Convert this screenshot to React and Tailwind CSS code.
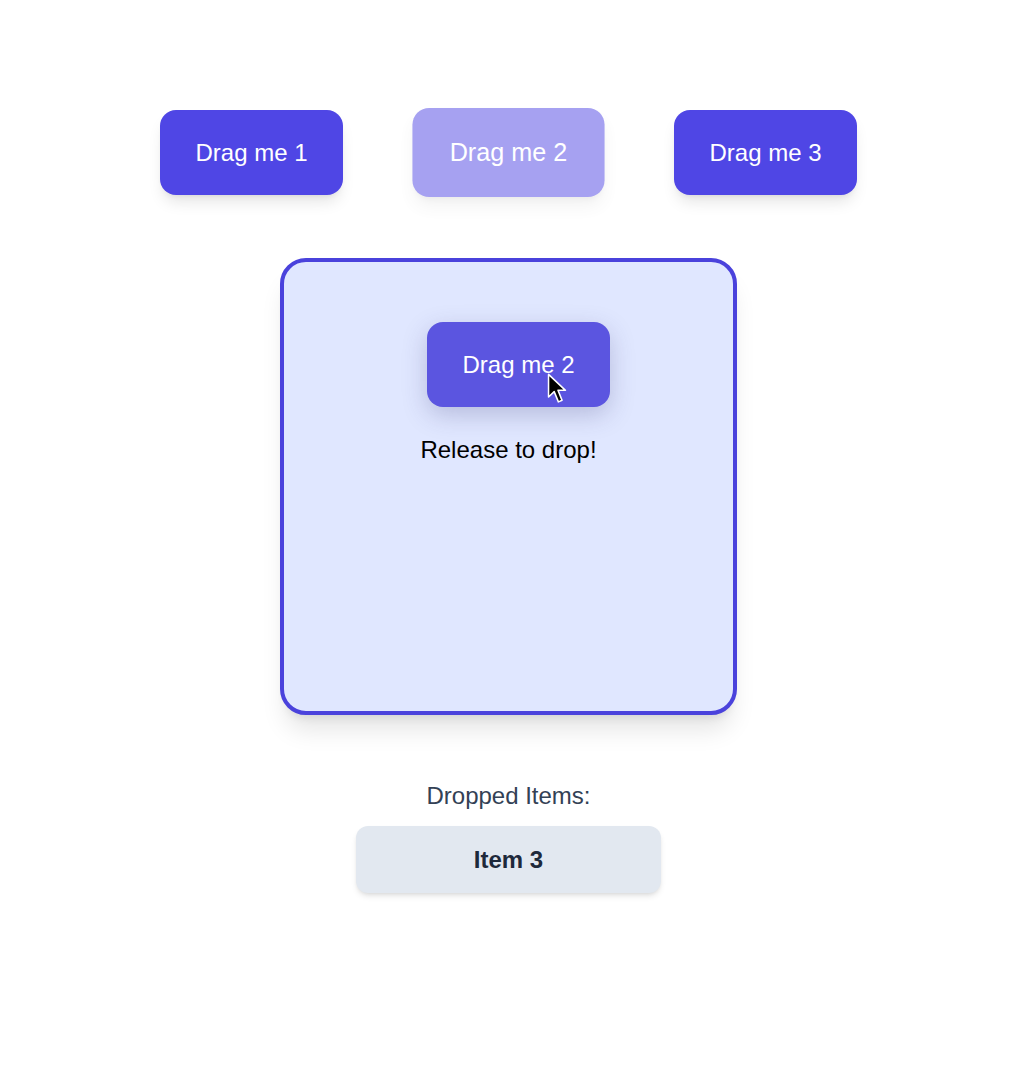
import React from "react";

function Cursor() {
  return (
    <svg width="20" height="31" viewBox="0 0 14 22" className="absolute left-[120px] top-[51px]">
      <path d="M1 1 L1 17 L5 13.2 L8 20.5 L10.6 19.4 L7.7 12.3 L13 12.3 Z" fill="#000" stroke="#fff" strokeWidth="1.1" strokeLinejoin="round" />
    </svg>
  );
}

export default function App() {
  const font = { fontFamily: '"Liberation Sans", Arial, sans-serif' };
  return (
    <div className="w-[1017px] min-h-[1084px] bg-white flex flex-col items-center pt-[110px]" style={font}>
      <div className="flex items-center gap-[74px]">
        <div className="w-[183px] h-[85px] rounded-2xl bg-[#4f46e5] text-white text-2xl flex items-center justify-center shadow-lg">Drag me 1</div>
        <div className="w-[183px] h-[85px] rounded-2xl bg-[#4f46e5] opacity-50 scale-105 text-white text-2xl flex items-center justify-center shadow-lg">Drag me 2</div>
        <div className="w-[183px] h-[85px] rounded-2xl bg-[#4f46e5] text-white text-2xl flex items-center justify-center shadow-lg">Drag me 3</div>
      </div>

      <div className="mt-[63px] w-[457px] h-[457px] rounded-[26px] border-4 border-[#4a42dc] bg-[#e0e7ff] shadow-xl flex flex-col items-center pt-[60px]">
        <div className="relative translate-x-[10px] w-[183px] h-[85px] rounded-2xl bg-[#5b55e0] text-white text-2xl flex items-center justify-center shadow-[0_8px_24px_rgba(60,60,120,0.25)]">
          Drag me 2
          <Cursor />
        </div>
        <div className="mt-[27px] text-2xl leading-8 text-black">Release to drop!</div>
      </div>

      <div className="mt-[65px] text-2xl leading-8 text-[#334155]">Dropped Items:</div>
      <div className="mt-[14px] w-[305px] h-[67px] rounded-xl bg-[#e2e8f0] shadow-md flex items-center justify-center text-2xl font-bold text-[#1e293b]">Item 3</div>
    </div>
  );
}
